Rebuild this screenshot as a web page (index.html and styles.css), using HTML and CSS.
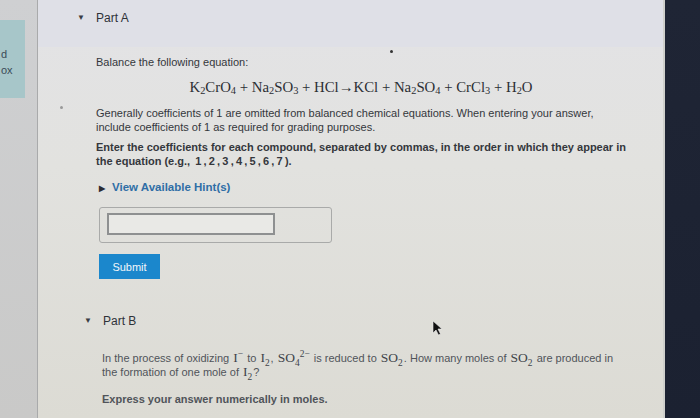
FILE: index.html
```html
<!DOCTYPE html>
<html>
<head>
<meta charset="utf-8">
<link rel="stylesheet" href="styles.css">
</head>
<body>
<div class="screen">
  <aside class="sidebar">
    <div class="teal">
      <span class="teal-text">d</span>
      <span class="teal-text">ox</span>
    </div>
  </aside>
  <main class="main">
    <section class="part">
      <div class="part-head">
        <span class="caret">&#9660;</span>
        <span class="part-title">Part A</span>
      </div>
      <div class="content">
        <p class="line">Balance the following equation:</p>
        <p class="equation">K<sub>2</sub>CrO<sub>4</sub> + Na<sub>2</sub>SO<sub>3</sub> + HCl&#8594;KCl + Na<sub>2</sub>SO<sub>4</sub> + CrCl<sub>3</sub> + H<sub>2</sub>O</p>
        <p class="para p-general">Generally coefficients of 1 are omitted from balanced chemical equations. When entering your answer,<br>include coefficients of 1 as required for grading purposes.</p>
        <p class="para bold p-enter">Enter the coefficients for each compound, separated by commas, in the order in which they appear in<br>the equation (e.g., <span class="mono">1,2,3,4,5,6,7</span>).</p>
        <div class="hint"><span class="hint-caret">&#9654;</span>View Available Hint(s)</div>
        <div class="answer-box"><div class="answer-input"></div></div>
        <button class="submit">Submit</button>
      </div>
    </section>
    <section class="part part-b">
      <div class="part-head-b">
        <span class="caret">&#9660;</span>
        <span class="part-title">Part B</span>
      </div>
      <div class="content-b">
        <p class="para light">In the process of oxidizing <span class="m">I<sup>&#8722;</sup></span> to <span class="m">I<sub>2</sub></span>, <span class="m">SO<sub>4</sub><sup>2&#8722;</sup></span> is reduced to <span class="m">SO<sub>2</sub></span>. How many moles of <span class="m">SO<sub>2</sub></span> are produced in<br>the formation of one mole of <span class="m">I<sub>2</sub></span>?</p>
        <p class="para bold light p-express">Express your answer numerically in moles.</p>
      </div>
    </section>
    <svg class="cursor" width="12" height="16" viewBox="0 0 12 16"><path d="M1 1 L1 13 L4 10 L6.5 15 L8.5 14 L6 9 L10 9 Z" fill="#111" stroke="#eee" stroke-width="0.6"/></svg>
    <span class="dot dot1"></span>
    <span class="dot dot2"></span>
  </main>
  <div class="edge"></div>
</div>
</body>
</html>
```
FILE: styles.css
```css
html, body {
  margin: 0;
  padding: 0;
  width: 700px;
  height: 418px;
  overflow: hidden;
  font-family: "Liberation Sans", Arial, sans-serif;
}
.screen {
  display: flex;
  width: 700px;
  height: 418px;
}
.sidebar {
  width: 38px;
  background: linear-gradient(180deg, #cfd0d2 0%, #c9c9c8 100%);
  border-right: 1px solid #a9aaab;
  box-sizing: border-box;
  padding-top: 20px;
}
.teal {
  width: 25px;
  height: 78px;
  background: #a7c6c9;
  display: flex;
  flex-direction: column;
  padding-top: 26px;
  box-sizing: border-box;
}
.teal-text {
  font-size: 11px;
  line-height: 16px;
  color: #3b4b57;
  margin-left: 1px;
}
.main {
  position: relative;
  flex: 1;
  background: linear-gradient(180deg, #e3e3e6 0%, #e2e2df 40%, #dcdbd4 100%);
  border-right: 2px solid #cfd0cc;
  color: #34373c;
}
.part-head {
  height: 47px;
  box-sizing: border-box;
  padding: 11px 0 0 39px;
  display: flex;
  align-items: flex-start;
  background: #dfe0e7;
}
.caret {
  font-size: 8px;
  line-height: 14px;
  width: 19px;
  color: #3a3d44;
}
.part-title {
  font-size: 12px;
  line-height: 14px;
  color: #2e3238;
}
.content {
  padding-left: 58px;
  width: 530px;
}
p { margin: 0; }
.line {
  margin-top: 8px;
  font-size: 11px;
  line-height: 14px;
}
.equation {
  margin-top: 8px;
  font-family: "Liberation Serif", "Times New Roman", serif;
  font-size: 14.8px;
  line-height: 20px;
  text-align: center;
  color: #2b2e33;
}
sub, sup {
  font-size: 70%;
  line-height: 0;
}
.equation sub { vertical-align: -0.2em; }
.para {
  font-size: 11px;
  line-height: 14px;
}
.p-general { margin-top: 9px; }
.p-enter { margin-top: 6px; }
.bold { font-weight: bold; }
.mono { letter-spacing: 2.2px; margin-left: 2px; }
.hint {
  margin-top: 12px;
  font-size: 11.5px;
  line-height: 14px;
  font-weight: bold;
  color: #2f6ea6;
  padding-left: 3px;
}
.hint-caret {
  font-size: 8px;
  color: #2a2d33;
  margin-right: 7px;
}
.answer-box {
  margin: 11px 0 0 3px;
  width: 233px;
  height: 36px;
  box-sizing: border-box;
  border: 1px solid #a9aaa9;
  border-radius: 3px;
  padding: 5px 0 0 7px;
}
.answer-input {
  width: 168px;
  height: 22px;
  box-sizing: border-box;
  border: 2px solid #8e9091;
  background: #e9e9e6;
}
.submit {
  display: block;
  margin: 11px 0 0 3px;
  width: 61px;
  height: 25px;
  border: none;
  background: #1b87cc;
  color: #f2f6fa;
  font-family: "Liberation Sans", Arial, sans-serif;
  font-size: 11px;
  padding: 0;
}
.part-b { margin-top: 35px; }
.part-head-b {
  display: flex;
  padding-left: 46px;
}
.content-b {
  padding-left: 64px;
  margin-top: 23px;
}
.light { color: #50545a; }
.m {
  font-family: "Liberation Serif", "Times New Roman", serif;
  font-size: 13.5px;
  color: #40444a;
  margin: 0 1px;
}
.p-express { margin-top: 13px; }
.cursor {
  position: absolute;
  left: 394px;
  top: 320px;
}
.dot {
  position: absolute;
  width: 3px;
  height: 3px;
  border-radius: 50%;
  background: #333;
}
.dot1 { left: 352px; top: 50px; }
.dot2 { left: 22px; top: 106px; background: #999; }
.edge {
  width: 35px;
  background: linear-gradient(180deg, #1f2535 0%, #1b2131 100%);
}
```
